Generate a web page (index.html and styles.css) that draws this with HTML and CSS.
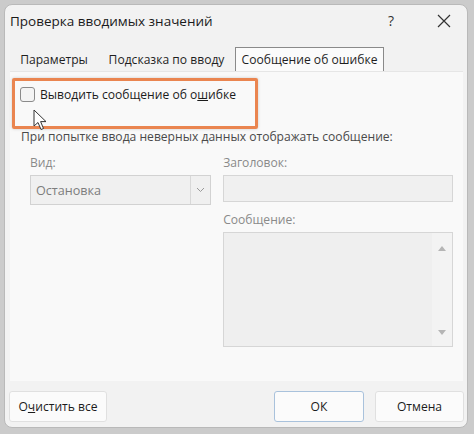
FILE: index.html
```html
<!DOCTYPE html>
<html lang="ru">
<head>
<meta charset="utf-8">
<link rel="stylesheet" href="styles.css">
</head>
<body>
<div class="dialog">
  <div class="titlebar">
    <span class="title">Проверка вводимых значений</span>
    <span class="tb-help">?</span>
    <span class="tb-close">
      <svg width="14" height="14" viewBox="0 0 14 14"><path d="M1 1L13 13M13 1L1 13" stroke="#333" stroke-width="1.2" fill="none"/></svg>
    </span>
  </div>
  <div class="tabs">
    <div class="tab t1">Параметры</div>
    <div class="tab t2">Подсказка по вводу</div>
    <div class="tab t3 active">Сообщение об ошибке</div>
  </div>
  <div class="panel">
    <div class="check-row">
      <span class="checkbox"></span>
      <span class="check-label">Выводить сообщение об о<u>ш</u>ибке</span>
    </div>
    <div class="hint">При попытке ввода неверных данных отображать сообщение:</div>
    <div class="fields">
      <div class="col left">
        <div class="label">Вид:</div>
        <div class="combo">
          <span class="combo-text">Остановка</span>
          <span class="combo-btn">
            <svg width="9" height="6" viewBox="0 0 9 6"><path d="M1 1L4.5 4.5L8 1" stroke="#999" stroke-width="1" fill="none"/></svg>
          </span>
        </div>
      </div>
      <div class="col right">
        <div class="label">Заголовок:</div>
        <div class="input"></div>
        <div class="label second">Сообщение:</div>
        <div class="textarea">
          <div class="scroll">
            <svg width="8" height="5" viewBox="0 0 8 5"><path d="M0 5L4 0L8 5Z" fill="#b5b5b5"/></svg>
            <svg width="8" height="5" viewBox="0 0 8 5"><path d="M0 0L4 5L8 0Z" fill="#b5b5b5"/></svg>
          </div>
        </div>
      </div>
    </div>
    <div class="highlight"></div>
    <svg class="cursor" width="16" height="22" viewBox="0 0 16 22"><path d="M1 1L1 17L5 13.5L8 20.5L10.5 19.5L7.6 12.6L13 12.6Z" fill="#fff" stroke="#333" stroke-width="1" stroke-linejoin="round"/></svg>
  </div>
  <div class="footer">
    <div class="btn clear">О<u>ч</u>истить все</div>
    <div class="spacer"></div>
    <div class="btn ok">ОК</div>
    <div class="btn cancel">Отмена</div>
  </div>
</div>
</body>
</html>
```
FILE: styles.css
```css
* { box-sizing: border-box; }
html, body { margin: 0; padding: 0; }
body {
  background: #cbcbcb;
  width: 474px;
  height: 434px;
  padding: 4px 6px 6px 4px;
  font-family: "Open Sans", "Noto Sans", sans-serif;
  font-size: 12.1px;
  color: #1c1c1c;
}
.dialog {
  width: 464px;
  height: 424px;
  background: #f2f2f2;
  border: 1px solid #b9b9b9;
  border-radius: 8px;
  display: flex;
  flex-direction: column;
  overflow: hidden;
}
.titlebar {
  height: 37px;
  display: flex;
  align-items: center;
  padding-left: 5px;
  flex-shrink: 0;
}
.title {
  font-size: 13.5px;
  flex: 1;
  color: #1a1a1a;
  padding-bottom: 6px;
}
.tb-help {
  font-size: 14px;
  width: 20px;
  margin-right: 29px;
  color: #333;
  padding-bottom: 6px;
}
.tb-close {
  width: 30px;
  display: flex;
  padding-bottom: 6px;
}
.tabs {
  display: flex;
  height: 29px;
  padding: 5px 0 0 5px;
  flex-shrink: 0;
}
.tab {
  height: 24px;
  display: flex;
  align-items: center;
  justify-content: center;
  color: #1f1f1f;
}
.t1 { width: 88px; }
.t2 { width: 137px; }
.t3 { width: 149px; }
.tab.active {
  border: 1px solid #8a8a8a;
  border-bottom: none;
  background: #fbfbfb;
}
.panel {
  position: relative;
  margin: 0 4px 0 5px;
  height: 310px;
  background: #f9f9f9;
  border-top: 1px solid #e6e6e6;
  padding: 14px 10px 0 10px;
  flex-shrink: 0;
}
.check-row {
  display: flex;
  align-items: center;
  height: 16px;
}
.checkbox {
  width: 15px;
  height: 15px;
  border: 1px solid #8b8b8b;
  border-radius: 3px;
  background: #f4f4f4;
  margin-right: 5px;
}
.check-label { color: #1c1c1c; }
.check-label u { text-decoration-thickness: 1px; }
.hint {
  margin-top: 26px;
  height: 18px;
  line-height: 18px;
  padding-left: 1px;
  color: #4a4a4a;
}
.fields {
  display: flex;
  margin-top: 8px;
  padding-left: 10px;
}
.col { display: flex; flex-direction: column; }
.left { width: 182px; margin-right: 12px; }
.right { width: 231px; }
.label {
  color: #8a8a8a;
  height: 18px;
  line-height: 18px;
}
.label.second { margin-top: 9px; }
.combo {
  margin-top: 3px;
  height: 30px;
  border: 1px solid #d2d2d2;
  background: #f0f0f0;
  display: flex;
  align-items: center;
}
.combo-text {
  flex: 1;
  padding-left: 5px;
  color: #7d7d7d;
  font-size: 12.6px;
}
.combo-btn {
  width: 20px;
  height: 100%;
  border-left: 1px solid #d8d8d8;
  display: flex;
  align-items: center;
  justify-content: center;
}
.input {
  margin-top: 3px;
  height: 27px;
  border: 1px solid #d6d6d6;
  background: #f0f0f0;
}
.textarea {
  margin-top: 3px;
  height: 115px;
  border: 1px solid #d6d6d6;
  background: #efefef;
  display: flex;
  justify-content: flex-end;
}
.scroll {
  width: 20px;
  height: 100%;
  background: #f3f3f3;
  display: flex;
  flex-direction: column;
  align-items: center;
  justify-content: space-between;
  padding: 13px 0 11px;
}
.highlight {
  position: absolute;
  left: 2px;
  top: 6px;
  width: 246px;
  height: 51px;
  border: 3px solid #ea8550;
  border-radius: 2px;
  box-shadow: 0 0 3px rgba(120,120,120,0.35);
}
.cursor {
  position: absolute;
  left: 23px;
  top: 37px;
}
.footer {
  display: flex;
  align-items: center;
  padding: 10px 3px 0 4px;
}
.spacer { flex: 1; }
.btn {
  height: 31px;
  display: flex;
  align-items: center;
  justify-content: center;
  background: #fbfbfb;
  border: 1px solid #e0e0e0;
  border-radius: 3px;
  color: #1c1c1c;
}
.clear { width: 98px; }
.ok { width: 90px; border-color: #a9c2dc; margin-right: 11px; }
.cancel { width: 89px; }
```
